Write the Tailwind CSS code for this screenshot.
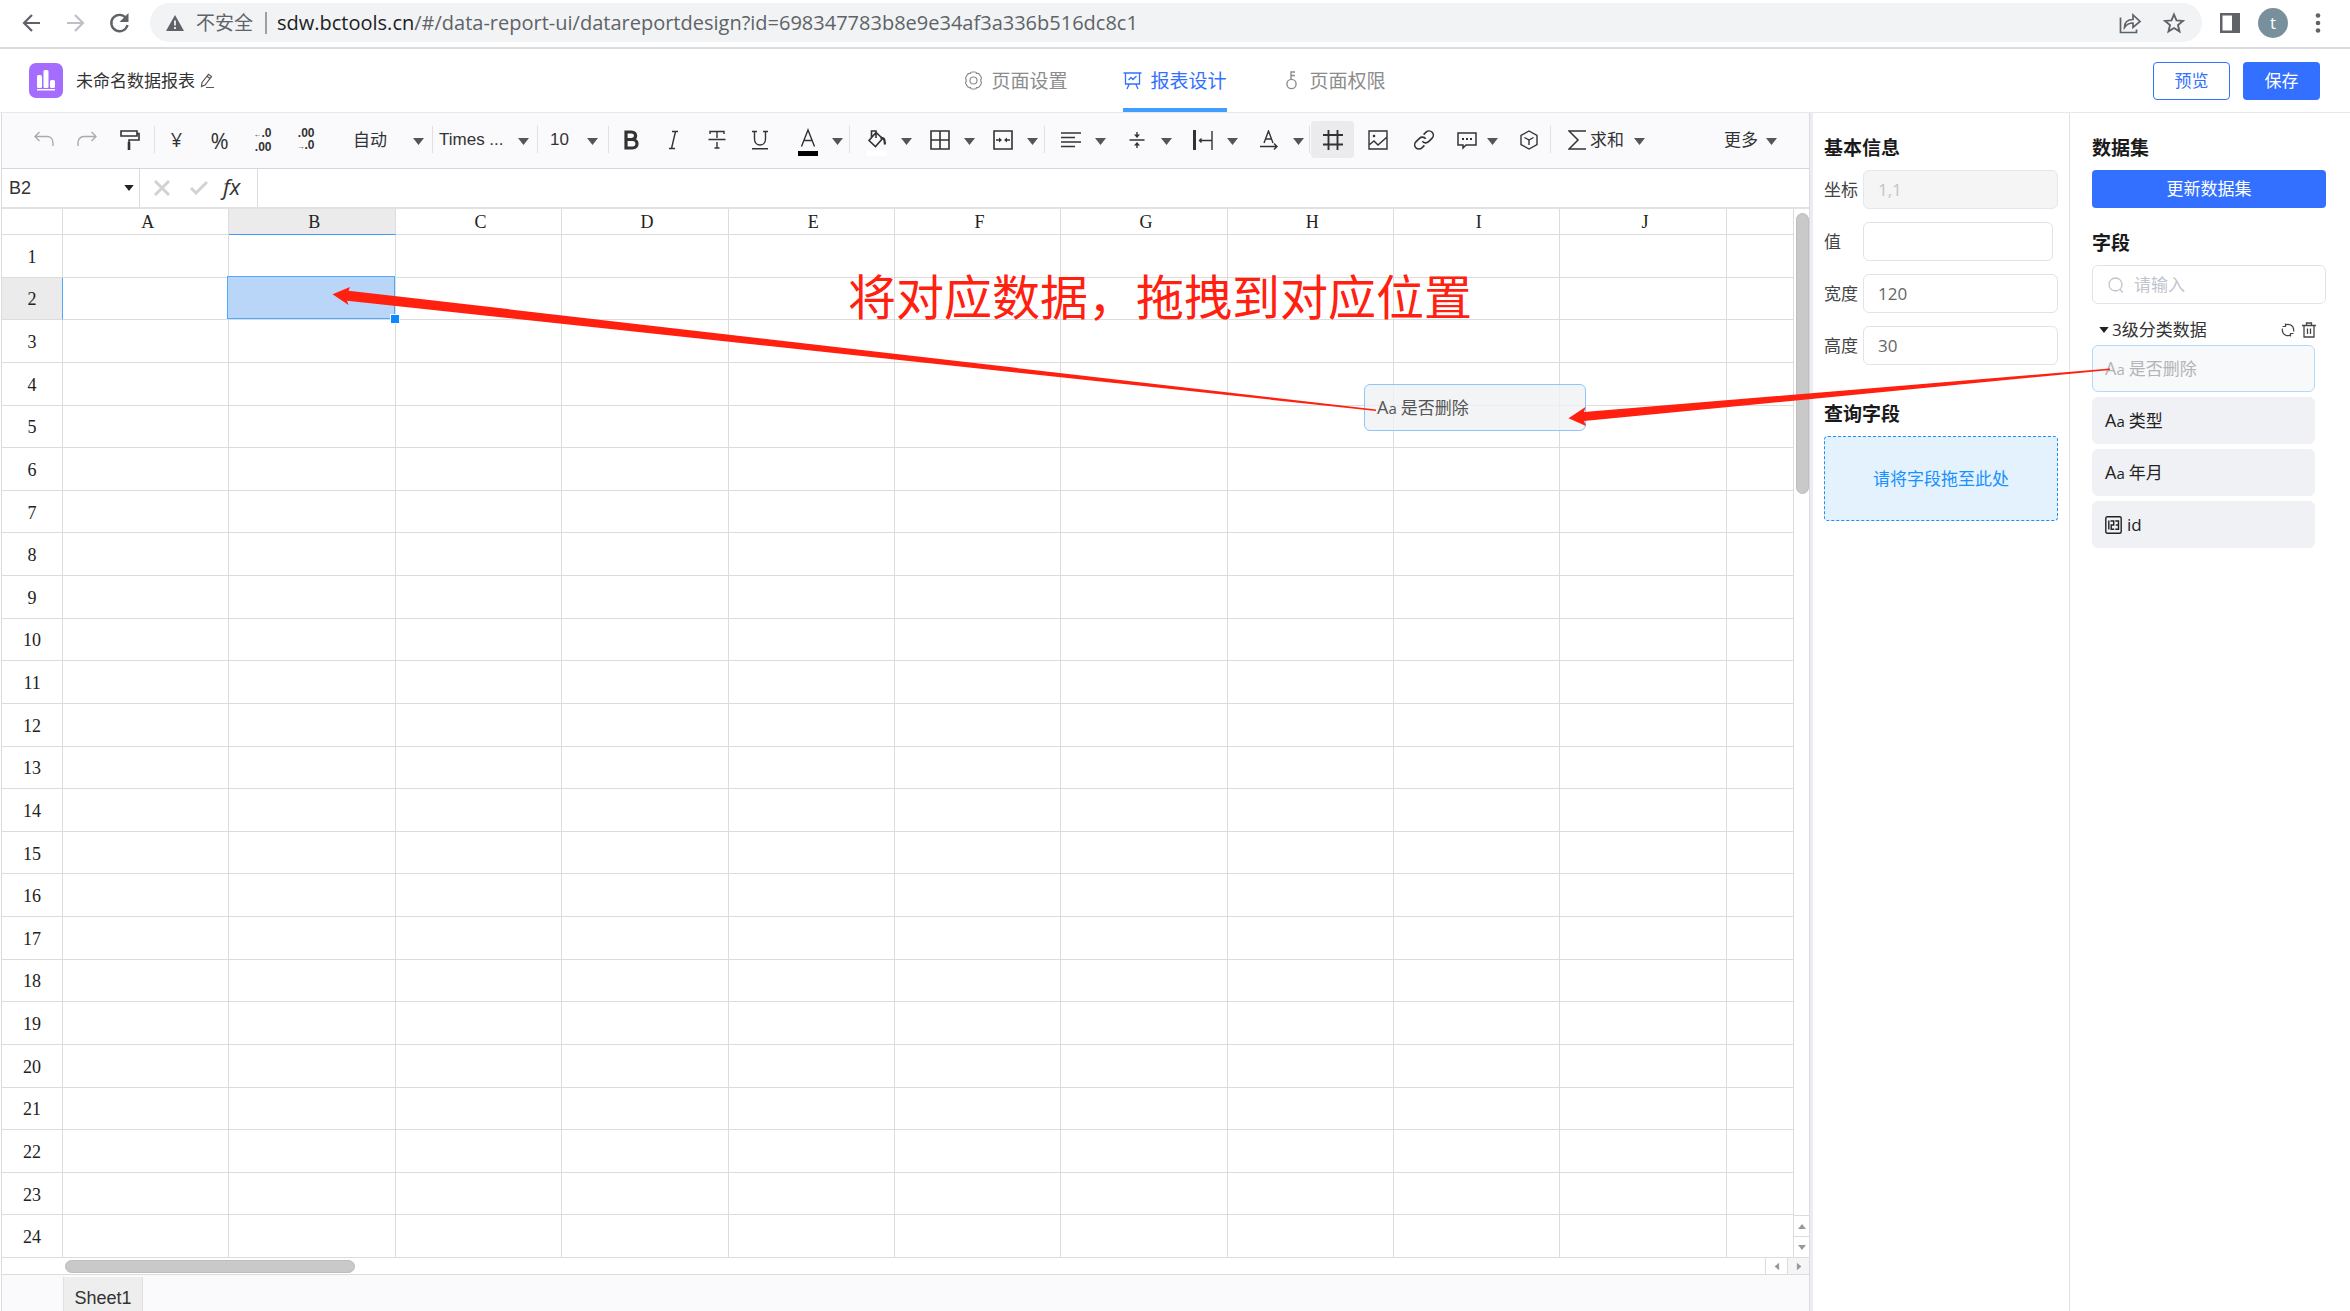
<!DOCTYPE html>
<html lang="zh-CN">
<head>
    <meta charset="UTF-8">
    <meta name="viewport" content="width=device-width, initial-scale=1.0">
    <title>未命名数据报表</title>
    <script src="https://cdn.jsdelivr.net/npm/@tailwindcss/browser@4"></script>
</head>
<body class="h-screen flex flex-col overflow-hidden bg-white text-[17px] leading-6 text-[#444] font-['Open_Sans','Noto_Sans_CJK_SC',sans-serif]">
    <!-- Shared symbols -->
    <svg class="hidden">
        <symbol id="caret" viewBox="0 0 11 7"><path d="M0 0h11L5.500 7z" fill="currentColor"/></symbol>
    </svg>

    <!-- Browser bar -->
    <div class="flex items-center h-[49px] shrink-0 border-b-2 border-[#dcdcdc] pb-[2px] pl-[18px] pr-[22px] text-[#5f6368]">
        <button aria-label="Back" class="w-7 mr-4"><svg class="w-7 h-7" viewBox="0 0 28 28" fill="none" stroke="currentColor" stroke-width="2.200"><path d="M22 14H6M14 6l-8 8 8 8"/></svg></button>
        <button aria-label="Forward" class="w-7 mr-4 text-[#bdc1c6]"><svg class="w-7 h-7" viewBox="0 0 28 28" fill="none" stroke="currentColor" stroke-width="2.200"><path d="M5 14h16M13 6l8 8-8 8"/></svg></button>
        <button aria-label="Reload" class="w-7 mr-4"><svg class="w-7 h-7" viewBox="0 0 28 28"><path d="M20 9a8.200 8.200 0 1 0 1.500 7" fill="none" stroke="currentColor" stroke-width="2.400"/><path d="M22.500 4v9h-9z" fill="currentColor"/></svg></button>
        <div class="flex-1 flex items-center h-[39px] rounded-full bg-[#f1f3f4] px-4">
            <svg class="w-[18px] h-4 mr-3" viewBox="0 0 18 16"><path d="M9 0l9 16H0z" fill="currentColor"/><path d="M9 5.500v5M9 12v2" stroke="#f1f3f4" stroke-width="1.800"/></svg>
            <span class="text-[19px]">不安全</span>
            <span class="w-[2px] h-[22px] bg-[#9aa0a6] ml-3 mr-[10px]"></span>
            <span class="text-[20px] whitespace-nowrap"><span class="text-[#202124]">sdw.bctools.cn</span>/#/data-report-ui/datareportdesign?id=698347783b8e9e34af3a336b516dc8c1</span>
            <button aria-label="Share" class="ml-auto mr-5"><svg class="w-6 h-6" viewBox="0 0 24 24" fill="none" stroke="currentColor" stroke-width="1.700"><path d="M2.500 6.500v15h16v-3"/><path d="M6.500 16.500c0-5 3-8 8.500-8V4l7 6.500-7 6V12c-4 0-6.500 1.500-8.500 4.500z"/></svg></button>
            <button aria-label="Bookmark"><svg class="w-6 h-6" viewBox="0 0 24 24" fill="none" stroke="currentColor" stroke-width="1.900"><path d="M12 3.500l2.500 5.900 6.400.5-4.900 4.200 1.500 6.300L12 17l-5.500 3.400L8 14.100 3.100 9.900l6.400-.5z"/></svg></button>
        </div>
        <button aria-label="Side panel" class="ml-[18px] mr-[18px]"><svg class="w-5 h-5" viewBox="0 0 20 20"><path d="M0 0h20v20H0z" fill="currentColor"/><path d="M2.500 2.500H12v15H2.500z" fill="#fff"/></svg></button>
        <button aria-label="Profile" class="w-[30px] h-[30px] rounded-full bg-[#78909c] text-white text-[17px] leading-[26px]">t</button>
        <button aria-label="Menu" class="ml-5"><svg class="w-5 h-6" viewBox="0 0 20 24" fill="currentColor"><circle cx="10" cy="4.500" r="2.300"/><circle cx="10" cy="12" r="2.300"/><circle cx="10" cy="19.500" r="2.300"/></svg></button>
    </div>

    <!-- App header -->
    <header class="relative grid grid-cols-[1fr_auto_1fr] items-center h-[64px] shrink-0 border-b border-[#e8e8ea]">
        <div class="flex items-center pl-[29px]">
            <svg class="w-[34px] h-[35px] mr-[13px]" viewBox="0 0 34 35"><rect width="34" height="35" rx="7" fill="#a46dff"/><g fill="#fff"><rect x="8" y="12" width="5" height="13" rx="1.500"/><rect x="14.500" y="7" width="5" height="18" rx="1.500"/><rect x="21" y="17" width="5" height="8" rx="1.500"/><rect x="8" y="26" width="18" height="1.500"/></g></svg>
            <span class="text-[17px] text-[#333]">未命名数据报表</span>
            <button aria-label="重命名" class="ml-1"><svg class="w-4 h-4" viewBox="0 0 16 16" fill="none" stroke="#555" stroke-width="1.200"><path d="M3 9.500L9.500 1.300l3 2.300L6 12l-3.500 1.500zM8 3.300l3 2.300M7 14.500h8"/></svg></button>
        </div>
        <nav class="flex self-stretch gap-[56px] text-[19px] text-[#8c8c8c]">
            <a href="#" class="flex items-center gap-2 border-b-4 border-transparent pt-1">
                <svg class="w-[19px] h-[19px]" viewBox="0 0 19 19" fill="none" stroke="currentColor" stroke-width="1.200"><path d="M6.500 2.500C6.500 1.500 7 1 8 1h3c1 0 1.500.5 1.500 1.500 1.500-.2 2.500 0 3 1l1.800 3c.4.800.2 1.400-.5 2v2c.7.600.9 1.200.5 2l-1.800 3c-.5 1-1.500 1.200-3 1 0 1-.5 1.500-1.500 1.500H8c-1 0-1.500-.5-1.500-1.500-1.500.2-2.500 0-3-1l-1.800-3c-.4-.8-.2-1.400.5-2v-2c-.7-.6-.9-1.200-.5-2l1.800-3c.5-1 1.500-1.200 3-1z"/><circle cx="9.500" cy="9.500" r="3.500"/></svg>
                页面设置
            </a>
            <a href="#" class="flex items-center gap-2 border-b-4 border-[#409eff] text-[#3370ff] pt-1">
                <svg class="w-[19px] h-[19px]" viewBox="0 0 19 19" fill="none" stroke="currentColor" stroke-width="1.300"><path d="M.5 2h18M2.500 2v11h14V2M6 13.500L4 18M13 13.500l2 4.500M5.500 9l2.500-2.500 2 2L13.500 5"/></svg>
                报表设计
            </a>
            <a href="#" class="flex items-center gap-2 border-b-4 border-transparent pt-1">
                <svg class="w-[19px] h-[19px]" viewBox="0 0 19 19" fill="none" stroke="currentColor" stroke-width="1.400"><circle cx="8.500" cy="13" r="4.600"/><path d="M8 8.500V1h4M8 4.500h4"/></svg>
                页面权限
            </a>
        </nav>
        <div class="flex justify-end gap-[13px] pr-[30px]">
            <button class="w-[77px] h-[38px] rounded border border-[#3370ff] text-[#3370ff]">预览</button>
            <button class="w-[77px] h-[38px] rounded bg-[#3370ff] text-white">保存</button>
        </div>
    </header>

    <div class="flex flex-1 min-h-0">
        <!-- Spreadsheet -->
        <main class="flex-1 min-w-0 flex flex-col ml-px border-l border-r border-[#dcdcdc]">
            <!-- Toolbar -->
            <div class="flex items-center h-[56px] shrink-0 border-b border-[#d6d6d8] bg-[#fafafd] pl-5 pb-[2px] text-[#333]">
                <button aria-label="撤销" class="w-[43px] flex justify-center text-[#aaa]"><svg class="w-5 h-5" viewBox="0 0 20 20" fill="none" stroke="currentColor" stroke-width="1.400"><path d="M5.500 2L1 6.500 5.500 11M1 6.500h12c4 0 6 3 6 6.500v3"/></svg></button>
                <button aria-label="重做" class="w-[43px] flex justify-center text-[#aaa]"><svg class="w-5 h-5" viewBox="0 0 20 20" fill="none" stroke="currentColor" stroke-width="1.400"><path d="M14.500 2L19 6.500 14.500 11M19 6.500H7c-4 0-6 3-6 6.500v3"/></svg></button>
                <button aria-label="格式刷" class="w-[43px] flex justify-center"><svg class="w-5 h-5" viewBox="0 0 20 20" fill="none" stroke="currentColor" stroke-width="1.600"><path d="M1 1h16v5H1zM17 3.500h2V10H9v3"/><path d="M9 12v8" stroke-width="2.600"/></svg></button>
                <span class="w-px h-[27px] bg-[#e0e0e2] ml-[3px]"></span>
                <button aria-label="货币格式" class="w-[43px] text-[20px]">¥</button>
                <button aria-label="百分比格式" class="w-[43px] text-[22px]">%</button>
                <button aria-label="减少小数位数" class="w-[43px] flex justify-center text-[12px] leading-3 font-semibold font-['Liberation_Sans','Noto_Sans_CJK_SC',sans-serif]"><span class="flex flex-col items-end"><span><span class="text-[8px]">←</span>.0</span><span>.00</span></span></button>
                <button aria-label="增加小数位数" class="w-[43px] flex justify-center text-[12px] leading-3 font-semibold font-['Liberation_Sans','Noto_Sans_CJK_SC',sans-serif]"><span class="flex flex-col items-end"><span>.00</span><span><span class="text-[8px]">→</span>.0</span></span></button>
                <label class="relative flex items-center w-[105px]">
                    <select aria-label="数字格式" class="appearance-none w-full pl-[26px] text-[17px]"><option>自动</option></select>
                    <svg class="absolute right-2 w-[11px] h-[7px] mt-1 text-[#555]"><use href="#caret"/></svg>
                </label>
                <span class="w-px h-[27px] bg-[#e0e0e2]"></span>
                <label class="relative flex items-center w-[104px]">
                    <select aria-label="字体" class="appearance-none w-full pl-[6px] text-[17px] font-['Liberation_Sans',sans-serif]"><option>Times ...</option></select>
                    <svg class="absolute right-2 w-[11px] h-[7px] mt-1 text-[#555]"><use href="#caret"/></svg>
                </label>
                <span class="w-px h-[27px] bg-[#e0e0e2]"></span>
                <label class="relative flex items-center w-[70px]">
                    <select aria-label="字号" class="appearance-none w-full pl-3 text-[17px] font-['Liberation_Sans',sans-serif]"><option>10</option></select>
                    <svg class="absolute right-[10px] w-[11px] h-[7px] mt-1 text-[#555]"><use href="#caret"/></svg>
                </label>
                <span class="w-px h-[27px] bg-[#e0e0e2]"></span>
                <button aria-label="粗体" class="w-[43px] flex justify-center"><svg class="w-5 h-5" viewBox="0 0 20 20" fill="none" stroke="currentColor" stroke-width="3.200"><path d="M5 2h5.500c5.500 0 5.500 7.500 0 7.500H5h6.500c6 0 6 8.500 0 8.500H5zV18"/></svg></button>
                <button aria-label="斜体" class="w-[43px] flex justify-center"><svg class="w-5 h-5" viewBox="0 0 20 20" fill="none" stroke="currentColor" stroke-width="1.400"><path d="M8 1.500h6M5 18.500h6M11.500 1.500l-4 17"/></svg></button>
                <button aria-label="删除线" class="w-[43px] flex justify-center"><svg class="w-5 h-5" viewBox="0 0 20 20" fill="none" stroke="currentColor" stroke-width="1.400"><path d="M3 4V1.500h14V4M10 1.500V8M10 12v6M7.500 18h5M1.500 9.500h17"/></svg></button>
                <button aria-label="下划线" class="w-[43px] flex justify-center"><svg class="w-5 h-5" viewBox="0 0 20 20" fill="none" stroke="currentColor" stroke-width="1.400"><path d="M2 1.500h5M13 1.500h5M4.500 1.500V9c0 8 11 8 11 0V1.500M2 18.700h16"/></svg></button>
                <button aria-label="文字颜色" class="w-[63px] flex items-center gap-[14px] pl-[17px]">
                    <svg class="w-5 h-7 mt-1" viewBox="0 0 20 28" fill="none" stroke="currentColor" stroke-width="1.400"><path d="M3.500 18.500L10 2l6.500 16.500M6 12.500h8"/><path d="M0 23h20v5H0z" fill="#000" stroke="none"/></svg>
                    <svg class="w-[11px] h-[7px] mt-1 text-[#555]"><use href="#caret"/></svg>
                </button>
                <span class="w-px h-[27px] bg-[#e0e0e2] ml-[5px]"></span>
                <button aria-label="单元格颜色" class="w-[63px] flex items-center gap-[14px] pl-[17px]">
                    <svg class="w-5 h-7 mt-1" viewBox="0 0 20 28" fill="none" stroke="currentColor" stroke-width="1.600"><path d="M9 4.500L2 12.500l6.500 6 7-8zM4.500 10V3H9v7"/><path d="M13.500 9.500l3 1c1.500 1 1 3.500 1.500 6" stroke-width="2.200"/><path d="M0 23h20v5H0z" fill="#fff" stroke="none"/></svg>
                    <svg class="w-[11px] h-[7px] mt-1 text-[#555]"><use href="#caret"/></svg>
                </button>
                <button aria-label="边框" class="w-[63px] flex items-center gap-[14px] pl-[17px]">
                    <svg class="w-5 h-5" viewBox="0 0 20 20" fill="none" stroke="currentColor" stroke-width="1.600"><path d="M1 1h18v18H1zM10 1v18M1 10h18"/></svg>
                    <svg class="w-[11px] h-[7px] mt-1 text-[#555]"><use href="#caret"/></svg>
                </button>
                <button aria-label="合并单元格" class="w-[63px] flex items-center gap-[14px] pl-[17px]">
                    <svg class="w-5 h-5" viewBox="0 0 20 20" fill="none" stroke="currentColor" stroke-width="1.600"><path d="M1 1h18v18H1z"/><path d="M3 10h5M17 10h-5" stroke-width="1.300"/><path d="M6 7.500L9 10l-3 2.500zM14 7.500L11 10l3 2.500z" fill="currentColor" stroke="none"/></svg>
                    <svg class="w-[11px] h-[7px] mt-1 text-[#555]"><use href="#caret"/></svg>
                </button>
                <span class="w-px h-[27px] bg-[#e0e0e2] ml-[5px]"></span>
                <button aria-label="水平对齐" class="w-[66px] flex items-center gap-[14px] pl-4">
                    <svg class="w-5 h-5" viewBox="0 0 20 20" fill="none" stroke="currentColor" stroke-width="1.500"><path d="M0 3h20M0 7.500h14M0 12h20M0 16.500h14"/></svg>
                    <svg class="w-[11px] h-[7px] mt-1 text-[#555]"><use href="#caret"/></svg>
                </button>
                <button aria-label="垂直对齐" class="w-[66px] flex items-center gap-[14px] pl-4">
                    <svg class="w-5 h-5" viewBox="0 0 20 20" fill="none" stroke="currentColor" stroke-width="1.400"><path d="M2.500 10h15M10 2v5M10 18v-5"/><path d="M7 4.500h6L10 8zM7 15.500h6L10 12z" fill="currentColor" stroke="none"/></svg>
                    <svg class="w-[11px] h-[7px] mt-1 text-[#555]"><use href="#caret"/></svg>
                </button>
                <button aria-label="文本换行" class="w-[66px] flex items-center gap-[14px] pl-4">
                    <svg class="w-5 h-5" viewBox="0 0 20 20" fill="none" stroke="currentColor" stroke-width="1.400"><path d="M1.500 0v20" stroke-width="3"/><path d="M19 1v19M6 10.500h13M8.500 8.500l-2 2 2 2"/></svg>
                    <svg class="w-[11px] h-[7px] mt-1 text-[#555]"><use href="#caret"/></svg>
                </button>
                <button aria-label="文本旋转" class="w-[66px] flex items-center gap-[14px] pl-4">
                    <svg class="w-5 h-5" viewBox="0 0 20 20" fill="none" stroke="currentColor" stroke-width="1.400"><path d="M5 13L9.500 1 14 13M6.500 9h6M1 16.500h17M15 13.500l3 3-3 3"/></svg>
                    <svg class="w-[11px] h-[7px] mt-1 text-[#555]"><use href="#caret"/></svg>
                </button>
                <span class="w-px h-[27px] bg-[#e0e0e2] mr-px"></span>
                <button aria-label="网格线" class="w-[43px] h-[37px] flex items-center justify-center rounded-sm bg-[#ebebed]"><svg class="w-5 h-5" viewBox="0 0 20 20" fill="none" stroke="currentColor" stroke-width="1.900"><path d="M5.500 0v20M14.500 0v20M0 5h20M0 14.500h20"/></svg></button>
                <button aria-label="图片" class="w-[46px] ml-px flex justify-center"><svg class="w-5 h-5" viewBox="0 0 20 20" fill="none" stroke="currentColor" stroke-width="1.400"><path d="M1 1h18v18H1zM1 15l5-4 4 4 9-8"/><circle cx="6" cy="6" r="1.300" fill="currentColor" stroke="none"/></svg></button>
                <button aria-label="链接" class="w-[46px] flex justify-center"><svg class="w-5 h-5" viewBox="0 0 24 24" fill="none" stroke="currentColor" stroke-width="1.900"><path d="M10 13.500a5 5 0 0 0 7.500.5l4-4a5 5 0 0 0-7-7.500L11.500 5.500M14 10.500a5 5 0 0 0-7.500-.5l-4 4a5 5 0 0 0 7 7.500l3-3"/></svg></button>
                <button aria-label="评论" class="w-[60px] flex items-center gap-[10px] pl-[10px]">
                    <svg class="w-5 h-5" viewBox="0 0 20 20" fill="none" stroke="currentColor" stroke-width="1.500"><path d="M1 3h18v12H9l-3 3v-3H1z"/><path d="M5 9h2M9 9h2M13 9h2" stroke-width="1.900"/></svg>
                    <svg class="w-[11px] h-[7px] mt-1 text-[#555]"><use href="#caret"/></svg>
                </button>
                <button aria-label="数据透视表" class="w-[43px] flex justify-center"><svg class="w-5 h-5" viewBox="0 0 20 20" fill="none" stroke="currentColor" stroke-width="1.400"><path d="M10 1l8 4.500v9L10 19l-8-4.500v-9zM5.500 7.500L10 10l4.500-2.500M10 10v5"/></svg></button>
                <span class="w-px h-[27px] bg-[#e0e0e2]"></span>
                <button class="flex items-center pl-4 ml-px">
                    <svg class="w-[18px] h-5 mr-1" viewBox="0 0 18 20" fill="none" stroke="currentColor" stroke-width="1.500"><path d="M18 1H1l9 9-9 9h17"/></svg>
                    求和
                    <svg class="w-[11px] h-[7px] mt-1 ml-[10px] text-[#555]"><use href="#caret"/></svg>
                </button>
                <button class="flex items-center ml-auto mr-8">
                    更多
                    <svg class="w-[11px] h-[7px] mt-1 ml-2 text-[#555]"><use href="#caret"/></svg>
                </button>
            </div>

            <!-- Formula bar -->
            <div class="flex items-center h-[40px] shrink-0 border-b-2 border-[#e2e2e2] text-[18px] text-[#333] font-['Liberation_Sans',sans-serif]">
                <label class="relative flex items-center w-[138px] self-stretch border-r border-[#dcdcdc]">
                    <input aria-label="名称框" value="B2" class="w-full pl-[7px] outline-none">
                    <svg class="absolute right-[5px] w-[10px] h-[6px] text-[#222]"><use href="#caret"/></svg>
                </label>
                <button aria-label="取消" class="ml-[13px] text-[#d2d2d4]"><svg class="w-[18px] h-[18px]" viewBox="0 0 18 18" fill="none" stroke="currentColor" stroke-width="3"><path d="M2 2l14 14M16 2L2 16"/></svg></button>
                <button aria-label="确认" class="ml-[19px] text-[#d2d2d4]"><svg class="w-[18px] h-[18px]" viewBox="0 0 18 18" fill="none" stroke="currentColor" stroke-width="3"><path d="M1 9l5 5L17 3"/></svg></button>
                <button aria-label="插入函数" class="ml-[15px] text-[22px] leading-8 pb-1 italic font-['Open_Sans',sans-serif]">fx</button>
                <input aria-label="公式" class="flex-1 self-stretch ml-[17px] border-l border-[#dcdcdc] pl-2 outline-none">
            </div>

            <!-- Grid and vertical scrollbar -->
            <div class="flex flex-1 min-h-0">
                <div class="flex-1 min-w-0">
                    <table class="w-full h-full table-fixed border-separate border-spacing-0 text-[18px] leading-5 text-[#222] font-['Liberation_Serif',serif]">
                        <colgroup id="cols"></colgroup>
                        <thead><tr id="head"></tr></thead>
                        <tbody id="rows"></tbody>
                    </table>
                </div>
                <div class="w-[15px] flex flex-col pt-1">
                    <div class="w-[13px] h-[281px] ml-[2px] rounded-full bg-[#c9c9c9] border border-[#bdbdbd]"></div>
                    <button aria-label="向上滚动" class="mt-auto h-[21px] border-t border-[#dcdcdc] flex items-center justify-center text-[#999]"><svg class="w-2 h-[5px] rotate-180"><use href="#caret"/></svg></button>
                    <button aria-label="向下滚动" class="h-[22px] border-y border-[#dcdcdc] flex items-center justify-center text-[#999]"><svg class="w-2 h-[5px]"><use href="#caret"/></svg></button>
                </div>
            </div>

            <!-- Horizontal scrollbar -->
            <div class="flex items-center h-[17px] shrink-0 border-b border-[#dcdcdc] pl-[61px]">
                <div class="w-[290px] h-[13px] ml-[2px] rounded-full bg-[#c9c9c9] border border-[#bdbdbd]"></div>
                <button aria-label="向左滚动" class="ml-auto w-[22px] self-stretch border-l border-[#dcdcdc] flex items-center justify-center text-[#999]"><svg class="w-2 h-[5px] rotate-90"><use href="#caret"/></svg></button>
                <button aria-label="向右滚动" class="w-[22px] self-stretch border-l border-[#dcdcdc] bg-[#f5f5f7] flex items-center justify-center text-[#999]"><svg class="w-2 h-[5px] -rotate-90"><use href="#caret"/></svg></button>
            </div>

            <!-- Sheet tabs -->
            <div class="flex h-[36px] shrink-0 bg-[#fafafd] pl-[61px] pt-[2px]">
                <button class="w-[80px] border-x border-[#e0e0e0] bg-[#eee] pt-2 text-[18px] leading-6 text-[#333] font-['Liberation_Sans',sans-serif]">Sheet1</button>
            </div>
        </main>

        <!-- Cell properties -->
        <aside class="w-[260px] shrink-0 border-l-[3px] border-r border-[#ececf2] border-r-[#e0e0e4] pl-[11px] pr-[11px]">
            <h2 class="mt-[23px] mb-[10px] text-[19px] leading-6 font-bold text-[#1a1a1a]">基本信息</h2>
            <div class="flex flex-col gap-[13px]">
                <div class="flex items-center">
                    <label for="pos" class="w-[39px] shrink-0">坐标</label>
                    <input id="pos" disabled value="1,1" class="w-full min-w-0 h-[39px] rounded-md border border-[#e4e7ed] bg-[#f5f5f5] px-[14px] text-[#c0c4cc]">
                </div>
                <div class="flex items-center pr-[5px]">
                    <label for="val" class="w-[39px] shrink-0">值</label>
                    <input id="val" class="w-full min-w-0 h-[39px] rounded-md border border-[#e0e3ea] px-[14px]">
                </div>
                <div class="flex items-center">
                    <label for="wid" class="w-[39px] shrink-0">宽度</label>
                    <input id="wid" value="120" class="w-full min-w-0 h-[39px] rounded-md border border-[#e0e3ea] px-[14px] text-[#666]">
                </div>
                <div class="flex items-center">
                    <label for="hei" class="w-[39px] shrink-0">高度</label>
                    <input id="hei" value="30" class="w-full min-w-0 h-[39px] rounded-md border border-[#e0e3ea] px-[14px] text-[#666]">
                </div>
            </div>
            <h2 class="mt-[37px] mb-[10px] text-[19px] leading-6 font-bold text-[#1a1a1a]">查询字段</h2>
            <div class="flex items-center justify-center h-[85px] rounded border border-dashed border-[#1890ff] bg-[#e4f2fe] text-[#1890ff]">请将字段拖至此处</div>
        </aside>

        <!-- Data set -->
        <aside class="w-[280px] shrink-0 pl-[22px] pr-6">
            <h2 class="mt-[23px] mb-[10px] text-[19px] leading-6 font-bold text-[#1a1a1a]">数据集</h2>
            <button class="w-full h-[38px] rounded bg-[#3370ff] text-white">更新数据集</button>
            <h2 class="mt-[23px] mb-[10px] text-[19px] leading-6 font-bold text-[#1a1a1a]">字段</h2>
            <label class="relative flex items-center">
                <svg class="absolute left-4 w-4 h-4" viewBox="0 0 16 16" fill="none" stroke="#c0c4cc" stroke-width="1.300"><circle cx="7.500" cy="7.500" r="6.500"/><path d="M12 12.500l3 3"/></svg>
                <input aria-label="搜索字段" placeholder="请输入" class="w-full h-[39px] rounded-md border border-[#e0e3ea] pl-[41px] placeholder:text-[#c0c4cc]">
            </label>
            <div class="flex items-center h-6 mt-[14px] mb-[3px] pl-[7px] pr-[10px] text-[#333]">
                <svg class="w-[10px] h-[6px] mr-[3px] text-[#222]"><use href="#caret"/></svg>
                <span>3级分类数据</span>
                <button aria-label="刷新" class="ml-auto mr-[7px]"><svg class="w-[14px] h-[14px]" viewBox="0 0 14 14" fill="none" stroke="#444" stroke-width="1.200"><path d="M4 2.200A5.700 5.700 0 0 1 12.700 7v1.500M10 11.800A5.700 5.700 0 0 1 1.300 7V5.500M4.500.5V3.500H1.500M9.500 13.500v-3h3"/></svg></button>
                <button aria-label="删除"><svg class="w-[14px] h-4" viewBox="0 0 14 16" fill="none" stroke="#444" stroke-width="1.300"><path d="M0 3.500h14M2 3.500V15h10V3.500M4.500 3V1h5v2M5.500 6.500v5.500M8.500 6.500v5.500"/></svg></button>
            </div>
            <ul class="flex flex-col gap-[5px] pr-[11px] text-[#222]">
                <li class="flex items-center gap-1 h-[47px] rounded-md border border-[#b3d8ff] bg-[#f8f9fa] px-3 text-[#b4b4b6]"><span><span class="text-[18px]">A</span><span class="text-[15px]">a</span></span>是否删除</li>
                <li class="flex items-center gap-1 h-[47px] rounded-md border border-[#f0f1f4] bg-[#f0f1f4] px-3"><span><span class="text-[18px]">A</span><span class="text-[15px]">a</span></span>类型</li>
                <li class="flex items-center gap-1 h-[47px] rounded-md border border-[#f0f1f4] bg-[#f0f1f4] px-3"><span><span class="text-[18px]">A</span><span class="text-[15px]">a</span></span>年月</li>
                <li class="flex items-center gap-[5px] h-[47px] rounded-md border border-[#f0f1f4] bg-[#f0f1f4] px-3"><svg class="w-[17px] h-[18px]" viewBox="0 0 17 18" fill="none" stroke="currentColor" stroke-width="1.400"><rect x=".8" y=".8" width="15.400" height="16.400" rx="1.500"/><path d="M3.800 4.500v9M5.500 5h3.200v4H6.200v4.200h3M10.300 5h3.200v8.200h-3.200M10.800 9h2.700"/></svg>id</li>
            </ul>
        </aside>
    </div>

    <!-- Field being dragged -->
    <div class="absolute left-[1364px] top-[384px] flex items-center gap-1 w-[222px] h-[47px] rounded-md border border-[#8cc5ff] bg-[#f0f1f4]/80 px-3 text-[#555]"><span><span class="text-[18px]">A</span><span class="text-[15px]">a</span></span>是否删除</div>

    <!-- Annotation -->
    <svg class="absolute left-0 top-0 w-[2350px] h-[600px] pointer-events-none" viewBox="0 0 2350 600" fill="#ff2010">
        <path d="M1376 409.500L348.500 290.700 350 287 332.500 294.300 348.500 305 347 300.700 1376 411z"/>
        <path d="M2110 368.500L1584 412 1585.500 407 1568.500 418.300 1586 426 1584 421 2110 370z"/>
    </svg>
    <p class="absolute left-[848px] top-[262px] text-[48px] leading-[70px] whitespace-nowrap text-[#ff2010]">将对应数据，拖拽到对应位置</p>

    <script>
        const letters = ['A', 'B', 'C', 'D', 'E', 'F', 'G', 'H', 'I', 'J', ''];

        document.getElementById('cols').innerHTML = '<col class="w-[61px]">'
            + letters.map(letter => letter ? '<col class="w-[166px]">' : '<col class="w-[67px]">').join('');

        document.getElementById('head').innerHTML = '<th class="h-[26px] border-r border-b border-[#dcdcdc]"></th>'
            + letters.map(letter => letter === 'B'
                ? '<th class="h-[26px] pl-1 border-r border-b border-r-[#dcdcdc] border-b-[#3d9bf5] bg-[#ebebeb] font-normal">B</th>'
                : `<th class="h-[26px] pl-1 border-r border-b border-[#dcdcdc] font-normal">${letter}</th>`).join('');

        // Selected cell is B2
        const selection = '<div class="absolute -top-[2px] -left-[2px] right-0 bottom-0 bg-[#b9d6f8] border border-[#4fa9ff]"></div>'
            + '<div class="absolute -right-[5px] -bottom-[5px] z-10 w-[10px] h-[10px] bg-[#0a8aff] border border-white"></div>';

        let rows = '';
        for (let row = 1; row <= 24; row++) {
            rows += row === 2
                ? '<tr><th class="h-[42px] pt-[2px] border-r border-b border-r-[#4fa9ff] border-b-[#dcdcdc] bg-[#ebebeb] font-normal">2</th>'
                : `<tr><th class="h-[42px] pt-[2px] border-r border-b border-[#dcdcdc] font-normal">${row}</th>`;
            letters.forEach(letter => {
                rows += `<td class="relative border-r border-b border-[#dcdcdc]">${row === 2 && letter === 'B' ? selection : ''}</td>`;
            });
            rows += '</tr>';
        }
        document.getElementById('rows').innerHTML = rows;
    </script>
</body>
</html>
